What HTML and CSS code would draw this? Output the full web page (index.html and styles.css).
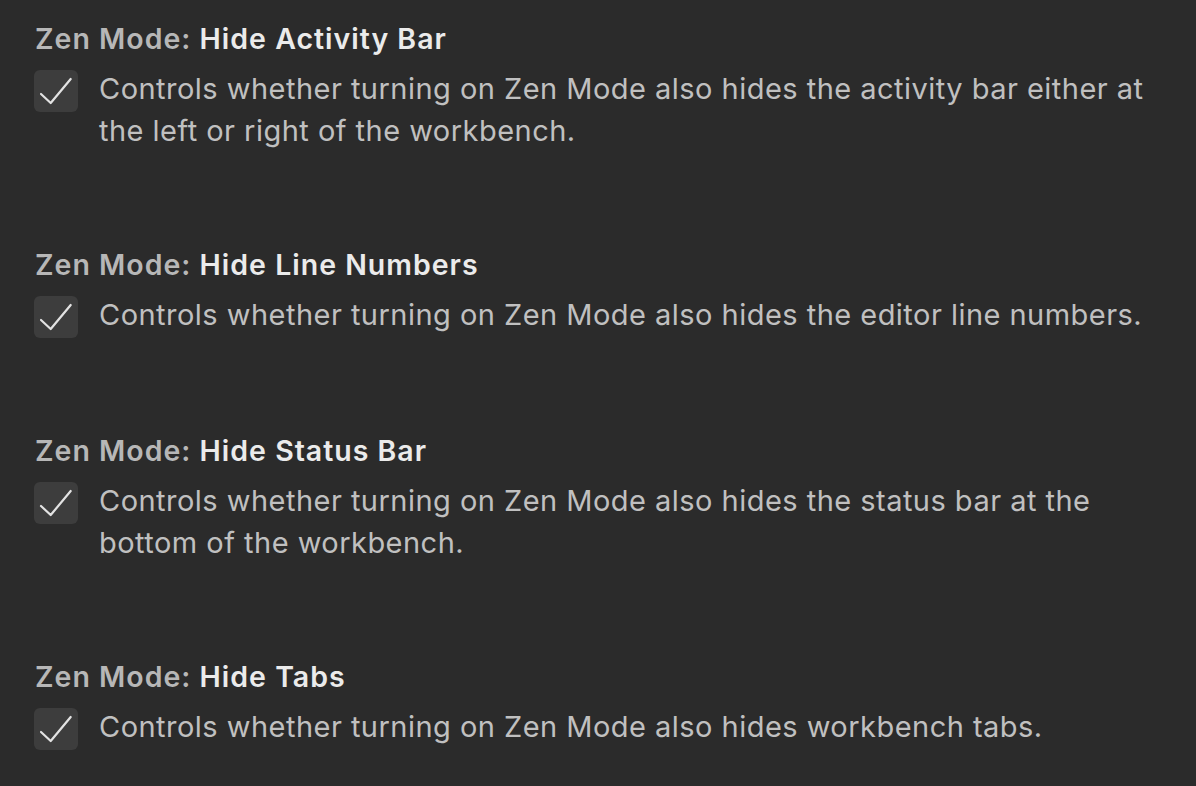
FILE: index.html
```html
<!DOCTYPE html>
<html>
<head>
<meta charset="utf-8">
<link rel="stylesheet" href="styles.css">
</head>
<body>
<div class="settings">
  <div class="setting">
    <div class="title"><span class="cat">Zen Mode: </span><span class="name">Hide Activity Bar</span></div>
    <div class="row">
      <div class="checkbox"><svg width="44" height="42" viewBox="0 0 44 42"><path d="M7 24 L16.7 33 L36.7 9" fill="none" stroke="#e2e2e2" stroke-width="2.2" stroke-linecap="round" stroke-linejoin="round"/></svg></div>
      <div class="desc">Controls whether turning on Zen Mode also hides the activity bar either at the left or right of the workbench.</div>
    </div>
  </div>
  <div class="setting">
    <div class="title"><span class="cat">Zen Mode: </span><span class="name">Hide Line Numbers</span></div>
    <div class="row">
      <div class="checkbox"><svg width="44" height="42" viewBox="0 0 44 42"><path d="M7 24 L16.7 33 L36.7 9" fill="none" stroke="#e2e2e2" stroke-width="2.2" stroke-linecap="round" stroke-linejoin="round"/></svg></div>
      <div class="desc">Controls whether turning on Zen Mode also hides the editor line numbers.</div>
    </div>
  </div>
  <div class="setting">
    <div class="title"><span class="cat">Zen Mode: </span><span class="name">Hide Status Bar</span></div>
    <div class="row">
      <div class="checkbox"><svg width="44" height="42" viewBox="0 0 44 42"><path d="M7 24 L16.7 33 L36.7 9" fill="none" stroke="#e2e2e2" stroke-width="2.2" stroke-linecap="round" stroke-linejoin="round"/></svg></div>
      <div class="desc">Controls whether turning on Zen Mode also hides the status bar at the bottom of the workbench.</div>
    </div>
  </div>
  <div class="setting">
    <div class="title"><span class="cat">Zen Mode: </span><span class="name">Hide Tabs</span></div>
    <div class="row">
      <div class="checkbox"><svg width="44" height="42" viewBox="0 0 44 42"><path d="M7 24 L16.7 33 L36.7 9" fill="none" stroke="#e2e2e2" stroke-width="2.2" stroke-linecap="round" stroke-linejoin="round"/></svg></div>
      <div class="desc">Controls whether turning on Zen Mode also hides workbench tabs.</div>
    </div>
  </div>
</div>
</body>
</html>
```

FILE: styles.css
```css
html, body {
  margin: 0;
  padding: 0;
  background: #2b2b2b;
  height: 100%;
  overflow: hidden;
}
.settings {
  padding: 18px 20px 0 34px;
  font-family: Inter, "Noto Sans", sans-serif;
}
.setting {
  margin-bottom: 92px;
}
.title {
  font-size: 28.5px;
  line-height: 42px;
  font-weight: 600;
  letter-spacing: 1.0px;
  margin-bottom: 8px;
  padding-left: 1px;
}
.cat {
  color: #b7b7b7;
}
.name {
  color: #ebebeb;
}
.row {
  display: flex;
  gap: 21px;
  align-items: flex-start;
}
.checkbox {
  flex: none;
  width: 44px;
  height: 42px;
  margin-top: 2px;
  background: #3d3d3d;
  border-radius: 6px;
}
.checkbox svg {
  display: block;
}
.desc {
  font-size: 29px;
  line-height: 42px;
  letter-spacing: 0.47px;
  color: #c0c0c0;
  max-width: 1065px;
}
```
